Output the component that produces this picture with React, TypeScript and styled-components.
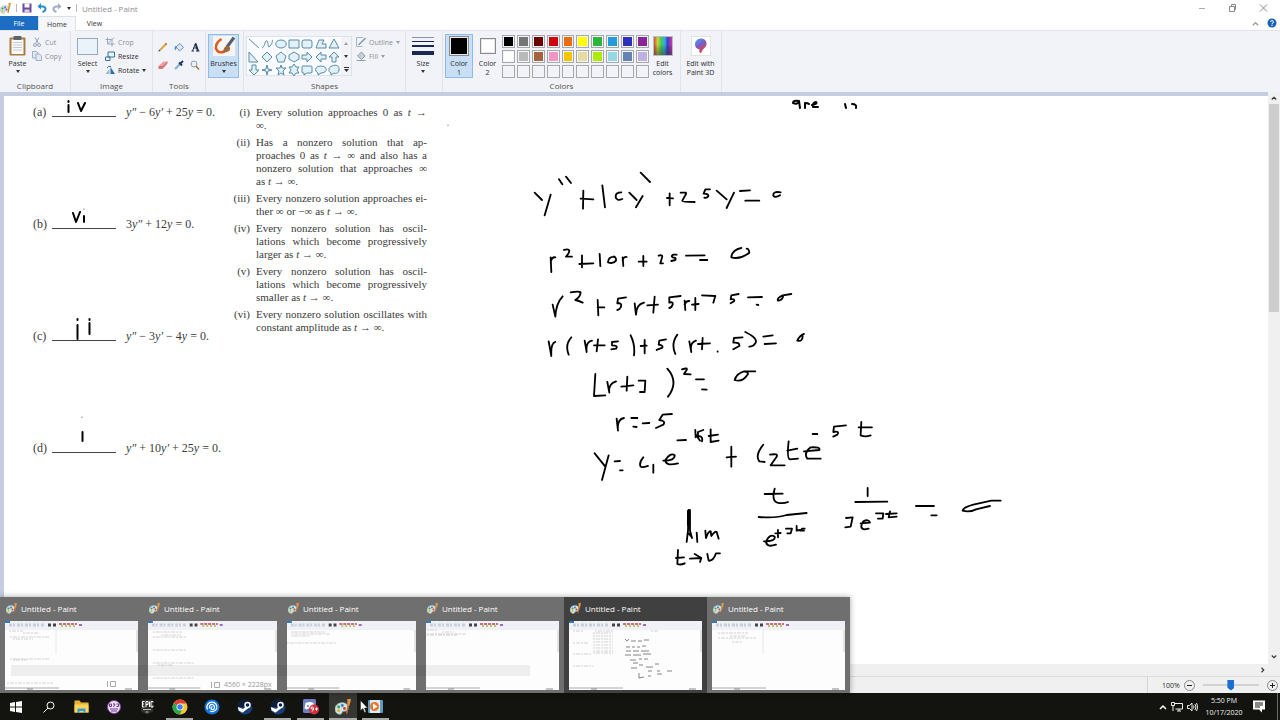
import React from "react";
import styled, { createGlobalStyle } from "styled-components";

const GlobalStyle = createGlobalStyle`
  * { box-sizing: border-box; }
  body { margin: 0; background: #fff; font: 7px/9px "Open Sans", "Noto Sans", sans-serif; color: #2b2b2b; }
  button, input { font: inherit; color: inherit; margin: 0; padding: 0; border: 0; background: none; }
  svg { display: block; flex: none; }
`;

/* ---------- window frame ---------- */

const Desktop = styled.div`
  min-height: 100vh;
  display: flex;
  flex-direction: column;
  position: relative;
`;

const TitleBar = styled.header`
  height: 16px;
  display: flex;
  align-items: center;
  justify-content: space-between;
  font-size: 8px;
  color: #8c8c8c;
`;

const TitleLeft = styled.div`
  display: flex;
  align-items: center;
  gap: 5px;
`;

const TitleRight = styled.div`
  display: flex;
  align-items: center;
  gap: 22px;
  padding-right: 12px;
`;

const Rule = styled.span`
  width: 1px;
  height: 8px;
  background: #b8b8b8;
`;

const PlainButton = styled.button`
  display: flex;
  align-items: center;
  justify-content: center;
`;

const TabBar = styled.nav`
  height: 15px;
  display: flex;
  align-items: stretch;
  border-bottom: 1px solid #e3e5ea;
`;

const Tab = styled.button<{ $kind?: "file" | "active" }>`
  width: ${(p) => (p.$kind ? 38 : 37)}px;
  color: ${(p) => (p.$kind === "file" ? "#fff" : "#333")};
  background: ${(p) =>
    p.$kind === "file" ? "#1b6ec2" : p.$kind === "active" ? "#f6f7fa" : "transparent"};
  border: solid #dcdfe5;
  border-width: ${(p) => (p.$kind === "active" ? "1px 1px 0" : "0")};
  margin-bottom: ${(p) => (p.$kind === "active" ? -1 : 0)}px;
`;

const TabTools = styled.div`
  margin-left: auto;
  display: flex;
  align-items: center;
  gap: 8px;
  padding-right: 3px;
`;

/* ---------- ribbon ---------- */

const Ribbon = styled.section`
  height: 61px;
  display: flex;
  background: #f1f3f8;
`;

const Group = styled.section<{ $w: number }>`
  width: ${(p) => p.$w}px;
  padding-top: 3px;
  display: flex;
  flex-direction: column;
  justify-content: space-between;
  border-right: 1px solid #e0e3e9;
`;

const GroupBody = styled.div<{ $gap?: number; $left?: number }>`
  display: flex;
  align-items: flex-start;
  gap: ${(p) => p.$gap ?? 0}px;
  padding-left: ${(p) => p.$left ?? 0}px;
`;

const GroupName = styled.h2`
  margin: 0 0 2px;
  font: inherit;
  font-size: 8px;
  text-align: center;
  color: #505050;
  height: 9px;
`;

const BigButton = styled.button<{ $w: number; $on?: boolean }>`
  width: ${(p) => p.$w}px;
  height: 44px;
  flex: none;
  display: flex;
  flex-direction: column;
  align-items: center;
  white-space: nowrap;
  padding-top: ${(p) => (p.$on ? 1 : 2)}px;
  background: ${(p) => (p.$on ? "#c9dff6" : "transparent")};
  border: ${(p) => (p.$on ? "1px solid #8fbbe6" : "0")};
  & > svg {
    margin-top: 2px;
  }
`;

const BigIcon = styled.span`
  height: 20px;
  margin-bottom: 3px;
  display: flex;
  align-items: center;
`;

const SmallStack = styled.div`
  display: flex;
  flex-direction: column;
  padding-top: 1px;
`;

const SmallButton = styled.button<{ $dim?: boolean }>`
  height: 14px;
  display: flex;
  align-items: center;
  gap: 3px;
  white-space: nowrap;
  color: ${(p) => (p.$dim ? "#8d9097" : "#2b2b2b")};
`;

const ToolGrid = styled.div`
  display: grid;
  grid-template-columns: repeat(3, 16px);
  grid-auto-rows: 18px;
  padding-top: 4px;
`;

const Gallery = styled.div`
  display: flex;
  margin-top: 2px;
  height: 40px;
  border: 1px solid #dde3ea;
  background: #fafcff;
`;

const GalleryGrid = styled.div`
  display: grid;
  grid-template-columns: repeat(7, 1fr);
  grid-template-rows: repeat(3, 13px);
  width: 94px;
`;

const GalleryScroll = styled.div`
  width: 10px;
  display: grid;
  grid-template-rows: repeat(3, 13px);
  background: #f1f3f8;
`;

const ColorChip = styled.span<{ $color: string; $size: number }>`
  width: ${(p) => p.$size}px;
  height: ${(p) => p.$size}px;
  background: ${(p) => p.$color};
  border: 1px solid #8a8a8a;
  box-shadow: inset 0 0 0 1px #e8e8e8;
`;

const Palette = styled.div`
  display: grid;
  grid-template-columns: repeat(10, 1fr);
  grid-auto-rows: 13px;
  column-gap: 2px;
  row-gap: 2px;
  width: 147px;
  padding-top: 1px;
`;

const Swatch = styled.button<{ $color: string }>`
  background: ${(p) => p.$color};
  border: 1px solid #a6a8ac;
  box-shadow: inset 0 0 0 1px #f4f5f7;
`;

/* ---------- drawing area ---------- */

const Workspace = styled.main`
  flex: 1;
  display: flex;
  background: #c5cde0;
`;

const Canvas = styled.div`
  flex: 1;
  margin: 4px 0 0 4px;
  background: #fff;
  position: relative;
  overflow: hidden;
`;

const Paper = styled.div`
  display: flex;
  padding: 10px 0 0 29px;
  font: 11px/13px "Liberation Serif", "Times New Roman", serif;
  color: #3a3a3a;
`;

const Questions = styled.ol`
  list-style: none;
  margin: 0;
  padding: 0;
  width: 195px;
  display: grid;
  grid-auto-rows: 112px;
  font-size: 12px;
`;

const Question = styled.li`
  display: grid;
  grid-template-columns: 19px 64px 1fr;
  align-items: start;
  white-space: nowrap;
`;

const Blank = styled.span`
  height: 11px;
  border-bottom: 1px solid #444;
`;

const Formula = styled.span`
  padding-left: 10px;
`;

const Answers = styled.ol`
  list-style: none;
  margin: 0;
  padding: 0;
  width: 199px;
  display: flex;
  flex-direction: column;
  gap: 4px;
`;

const Answer = styled.li`
  display: grid;
  grid-template-columns: 22px 171px;
  column-gap: 6px;
`;

const Numeral = styled.span`
  text-align: right;
  white-space: nowrap;
`;

const Line = styled.span<{ $fill?: boolean }>`
  display: block;
  white-space: nowrap;
  text-align-last: ${(p) => (p.$fill ? "justify" : "left")};
`;

const Ink = styled.svg`
  position: absolute;
  left: 0;
  top: 0;
  fill: none;
  stroke: #000;
  stroke-linecap: round;
  stroke-linejoin: round;
`;

const VScroll = styled.div`
  width: 12px;
  background: #f0f0f0;
  display: flex;
  flex-direction: column;
  align-items: center;
  padding: 3px 0 4px;
`;

const VTrack = styled.div`
  flex: 1;
  width: 10px;
  margin: 3px 0;
`;

const VThumb = styled.div`
  height: 38%;
  background: #cdcdcd;
`;

const HScroll = styled.div`
  height: 12px;
  background: #f0f0f0;
  display: flex;
  align-items: center;
  justify-content: space-between;
  padding: 0 14px 0 3px;
`;

const StatusBar = styled.footer`
  height: 17px;
  background: #f0f0f0;
  border-top: 1px solid #dadada;
  display: flex;
  justify-content: flex-end;
  align-items: stretch;
`;

const Zoom = styled.div`
  width: 133px;
  border-left: 1px solid #d4d4d4;
  display: flex;
  align-items: center;
  gap: 4px;
  padding: 0 2px 0 14px;
`;

const ZoomRange = styled.input`
  flex: 1;
  min-width: 0;
  height: 12px;
  margin: 0 4px;
  appearance: none;
  background: linear-gradient(#d2d2d2, #d2d2d2) center / 100% 2px no-repeat;
  &::-webkit-slider-thumb {
    appearance: none;
    width: 7px;
    height: 11px;
    background: #1a6fd0;
    clip-path: polygon(0 0, 100% 0, 100% 75%, 50% 100%, 0 75%);
  }
`;

/* ---------- window previews ---------- */

const Previews = styled.div`
  position: absolute;
  left: 0;
  bottom: 27px;
  display: flex;
  height: 96px;
  background: #6f6f6f;
  box-shadow: 0 0 6px rgba(0, 0, 0, 0.35);
`;

const Preview = styled.button<{ $w: number; $on?: boolean }>`
  width: ${(p) => p.$w}px;
  padding: 0 5px 3px;
  display: flex;
  flex-direction: column;
  background: ${(p) => (p.$on ? "#404040" : "transparent")};
  color: #fff;
  font-size: 8px;
`;

const PreviewTitle = styled.span`
  height: 24px;
  display: flex;
  align-items: center;
  gap: 4px;
  padding: 0 0 2px 1px;
`;

const Mini = styled.span`
  flex: 1;
  width: 100%;
  background: #fdfdfd;
  overflow: hidden;
`;

const GhostBar = styled.span`
  position: absolute;
  left: 11px;
  top: 68px;
  width: 519px;
  height: 11px;
  background: rgba(0, 0, 0, 0.06);
`;

const GhostText = styled.span<{ $x: number }>`
  position: absolute;
  left: ${(p) => p.$x}px;
  top: 83px;
  display: flex;
  gap: 4px;
  align-items: center;
  color: #9b9b9b;
`;

/* ---------- taskbar ---------- */

const Taskbar = styled.footer`
  height: 27px;
  background: #131410;
  display: flex;
  justify-content: space-between;
  color: #f2f2f2;
`;

const Apps = styled.nav`
  display: flex;
  width: 392px;
`;

const AppButton = styled.button<{ $open?: boolean; $on?: boolean }>`
  flex: 1;
  display: flex;
  align-items: center;
  justify-content: center;
  background: ${(p) => (p.$on ? "#363733" : "transparent")};
  background-clip: content-box;
  padding: 0 2px;
  position: relative;
  &::after {
    content: "";
    display: ${(p) => (p.$open ? "block" : "none")};
    position: absolute;
    left: ${(p) => (p.$on ? 2 : 3)}px;
    right: ${(p) => (p.$on ? 2 : 3)}px;
    bottom: 0;
    height: 2px;
    background: #a9aaa8;
  }
`;

const Tray = styled.div`
  display: flex;
  align-items: center;
  gap: 4px;
`;

const Clock = styled.time`
  width: 42px;
  margin: 0 4px 0 1px;
  text-align: center;
  line-height: 12px;
  white-space: nowrap;
  font-size: 7px;
`;

const DesktopEdge = styled.span`
  width: 1px;
  height: 27px;
  margin: 0 2px 0 8px;
  background: #6a6a66;
`;

const Pointer = styled.svg`
  position: absolute;
  left: 360px;
  bottom: 7px;
`;

/* ---------- drawings ---------- */

const PaintLogo = ({ size = 11 }: { size?: number }) => (
  <svg width={size} height={size} viewBox="0 0 22 22">
    <path d="M10 5C4 5 0 9 0 14c0 4 3 7 7 7 3 0 2-3 4-4s6 1 7-4-3-8-8-8z" fill="#cfe3e6" stroke="#9fb8ba" />
    <circle cx="5" cy="11" r="2" fill="#3f9b45" />
    <circle cx="10" cy="9" r="2" fill="#2f7fd1" />
    <circle cx="5" cy="16" r="2" fill="#e6b422" />
    <circle cx="13" cy="13" r="2" fill="#d8432c" />
    <path d="M19 5l-3 15" stroke="#b9702c" strokeWidth="2" />
    <path d="M17 0h5l-2 9h-3z" fill="#e8953c" />
  </svg>
);

const Caret = ({ up, dim }: { up?: boolean; dim?: boolean }) => (
  <svg width="4" height="3" viewBox="0 0 4 3">
    <path d={up ? "M0 3h4L2 0z" : "M0 0h4L2 3z"} fill={dim ? "#9a9da3" : "#333"} />
  </svg>
);

const Chevron = ({ d, color = "#333", size = 7 }: { d: string; color?: string; size?: number }) => (
  <svg width={size} height={size} viewBox="0 0 8 8" fill="none" stroke={color} strokeWidth="1.5">
    <path d={d} />
  </svg>
);

const UP = "M1 6l3-3 3 3";
const DOWN = "M1 2l3 3 3-3";
const LEFT = "M6 1L3 4l3 3";
const RIGHT = "M2 1l3 3-3 3";

const SHAPES = [
  "M1 1l10 9", "M1 10C4 9 4 1 6 3s0 8 3 5 2-6 3-6", "M6 2c7 0 7 8 0 8s-7-8 0-8z", "M1 2h10v8H1z",
  "M3 2h6q2 0 2 2v4q0 2-2 2H3q-2 0-2-2V4q0-2 2-2z", "M4 2h5L7 6h4v4H1z", "M6 1l5 9H1z",
  "M1 1v10h9z", "M6 1l5 5-5 5-5-5z", "M6 1l5 4-2 6H3L1 5z", "M6 1l5 3v4l-5 3-5-3V4z",
  "M1 4h5V1l5 5-5 5V8H1z", "M11 4H6V1L1 6l5 5V8h5z", "M4 11V6H1l5-5 5 5H8v5z",
  "M4 1v5H1l5 5 5-5H8V1z", "M6 1l1 4 4 1-4 1-1 4-1-4-4-1 4-1z",
  "M6 1l1 3h4L8 7l1 4-3-2-3 2 1-4-3-3h4z", "M6 0l2 3h3L9 6l2 3H8l-2 3-2-3H1l2-3-2-3h3z",
  "M2 2h8q1 0 1 1v5q0 1-1 1H6l-3 2V9H2Q1 9 1 8V3q0-1 1-1z",
  "M6 2c7 0 7 7 0 7l-3 2V9C-1 7 0 2 6 2z", "M4 2c4-2 8 0 7 4 0 3-3 4-5 3l-3 2V9C0 8 0 3 4 2z",
];

const ROW_A = ["#000000", "#757575", "#6a0000", "#d1000c", "#ed6d0c", "#ffff00", "#2bb53b", "#239cd9", "#302fb9", "#8b2597"];
const ROW_B = ["#ffffff", "#b9b9b9", "#a5643f", "#f297c1", "#f5c500", "#e6dca2", "#aeeb09", "#95d7e5", "#6483b1", "#beb0e1"];
const ROW_C = Array(10).fill("#f1f3f8");

/* Pen strokes are recorded at three times the canvas scale, one entry per area. */
const STROKES = [
  {
    x: 520, y: 160,
    d: "M44 98l22 22M92 104L74 166M117 58l10 15M138 50l15 19M190 92l-1 54M182 116l38 2M247 76l8 66M304 97q-18 0-17 14 2 13 20 6M328 98l22 22M368 108l-20 34M362 38l28 28M449 100v36M441 114l18 1M482 98l16 0 0 4-11 20q0 4 37 4M570 88h-14l-5 13q16 0 14 8-4 6-12 4M590 92l30 26M642 98l-22 46M660 93l30-2M676 122l42 0M782 97q-24-4-22 10 6 8 20-1" +
      "M92 292l2 44M92 306q4-16 14-14M132 270q14-4 16 2 0 8-10 18l18 0M186 286v36M178 312l42-2M239 282l2 36M284 290q-20 0-20 17 16 6 24-5 1-12-8-12M308 292l2 26M308 302q4-14 12-11M370 288v30M356 305l24 0M416 287q14-4 10 6l-5 17h8M470 284h-10q-8 4-2 8 12 0 8 8l-12 3M498 287l56-1M540 300h22M664 264q-28 6-30 28 26 8 54-14-1-12-8-12" +
      "M98 434l8 36q2-40 22-61M152 397q28-4 30 1-2 14-16 22 10 2 22 8M233 420l2 46M233 442l20 0M318 412l-24 4-2 14q16-2 10 12-4 8-10 8M344 430l4 34q0-30 24-36M404 410l-4 48M382 436l32-2M482 408l-34 4 0 16q12-4 10 6-4 10-10 10M494 422l2 28M494 434q4-12 14-11M526 414v36M516 434l20-2M546 406l40 2-6 20M656 402l-22 4-2 12q14-2 10 6l-10 6M684 412l42-1M710 434l5 1M814 402l-26 4q-18 8-14 16 12 0 16-14" +
      "M86 544l8 44q-2-38 12-42M154 532q-20 22-8 52M194 542l6 34q-4-30 16-34M234 538l-4 36M222 556l32 0M294 544l-18 2 0 10q20 0 12 10l-14 2M332 526q14 28 10 60M374 540v40M362 558l18-1M438 538l-20 4-2 12q16 2 10 10l-16 6M472 524q-20 28-6 58M508 544l6 32q-6-28 14-34M548 534l-2 34M534 552l36-2M593 574v1M668 532l-26 2-2 14q20-2 18 10l-18 10M676 516q40 20 30 34-6 10-18 10M730 530l28-4M734 552l34-2M852 522q-12 4-20 20 16 4 16-14",
  },
  {
    x: 540, y: 350,
    d: "M166 72l-4 66 34-2M202 96l6 32q-4-26 20-34M262 80l-2 42M244 110l36-4M296 92l20 0-2 34-14 0M382 56q36 40 2 84M426 58q18-6 14 2l-8 12 20 1M468 88l24 0M486 118l14 1M646 64l-34 0q-22 6-28 26 24 8 40-18 0-8-12-8" +
      "M230 206l4 36q-4-34 18-38M274 204l18 0M280 230l10 1M308 220l20-1M396 192l-28 2-10 16q20 2 12 14l-22 10" +
      "M164 310l32 40M206 316l-20 74M224 334l16-1M240 361l8 0M310 322q-14 16-8 28 4 4 22-2M340 344v24M370 332q36 0 34-16-12-10-28 14 0 20 38 10M412 271l26-1M466 240l1 22M490 240l-16 6 0 12q16 0 12 16M468 254l12 18M512 238l0 38 24-4M506 258l28-4M574 290v60M560 322l28-2M670 284q-26 32-12 50l16 2M690 314q26-4 20 6l-18 26 42 0M746 274q-6 52 4 54l24-2M742 302l30-6M792 304l46-4q4-10-26-8-22 18-10 34l40 0M818 252l14 0M918 226l-36 4-2 16q20-4 12 8l-12 6M964 216l-2 40q14 6 30 0M956 232l40 0",
  },
  {
    x: 660, y: 470,
    d: "M86 120l-2 62-4 34M90 120l0 62 6 22M86 190l10 12M110 188l2 28M136 182l2 22q8-22 14-20l2 14q12-16 16-12l6 20" +
      "M54 240l-2 42q10 4 22-2M48 264l24-2M90 266l34-2M104 252l20 12-4 12M142 252l4 20q14 2 22-22l12 0" +
      "M344 56q-10 36 8 42 18 4 32-2M314 72l54-1M296 141q54 4 84-6l60-6M312 214q36 0 32-14-14-10-26 14 0 20 30 10M354 180v22M346 190l16-1M378 176l18 0-4 14-10 0M410 168l0 14 10-2M434 176l-8 0-4 6 10 0" +
      "M623 54v24M586 96l96-1M558 144l20-2-6 28-16 2M602 160l28-2q-4-12-20-4-14 22 4 24l12-2M648 130l22 0-2 16-14 0M690 124l-4 18 24-2M678 132l32-2M768 108l54 0M814 136l16 0M1022 92l-28 0-54 12q-30 8-32 18 20 6 40-4l42-10",
  },
];

const FILLED_IN =
  "M68.500 105v7M68.500 101v1M78 103l3 8 4-8M73 213l3 9 4-10M84 216v6M77.500 325v14M77.500 319v1M89.500 323v11M89.500 319v1M82.500 432v9";

type Entry = { n: string; lines: React.ReactNode[] };
const lim = <><i>t</i> → ∞</>;
const ENTRIES: Entry[] = [
  { n: "(i)", lines: [<>Every solution approaches 0 as <i>t</i> →</>, "∞."] },
  {
    n: "(ii)",
    lines: ["Has a nonzero solution that ap-", <>proaches 0 as {lim} and also has a</>, "nonzero solution that approaches ∞", <>as {lim}.</>],
  },
  { n: "(iii)", lines: ["Every nonzero solution approaches ei-", <>ther ∞ or −∞ as {lim}.</>] },
  { n: "(iv)", lines: ["Every nonzero solution has oscil-", "lations which become progressively", <>larger as {lim}.</>] },
  { n: "(v)", lines: ["Every nonzero solution has oscil-", "lations which become progressively", <>smaller as {lim}.</>] },
  { n: "(vi)", lines: ["Every nonzero solution oscillates with", <>constant amplitude as {lim}.</>] },
];

const Y = <i>y</i>;
const Y1 = <i>y′</i>;
const Y2 = <i>y″</i>;
const QUESTIONS: [string, React.ReactNode][] = [
  ["(a)", <>{Y2} − 6{Y1} + 25{Y} = 0.</>],
  ["(b)", <>3{Y2} + 12{Y} = 0.</>],
  ["(c)", <>{Y2} − 3{Y1} − 4{Y} = 0.</>],
  ["(d)", <>{Y2} + 10{Y1} + 25{Y} = 0.</>],
];

const MINI_INK = [
  "M4 10h14M18 12h16M5 16h40M8 18h20M5 38h40M8 39h14M2 62h46",
  "M5 11h30M14 14h20M5 16h34M5 29h34M5 42h42M10 44h16M5 57h42",
  "M4 11h36M5 13h40M4 15h20M0 22h50",
  "M1 9h10M16 11h12M1 13h40M1 14h30",
  "M4 10h10M4 22h16M4 33h18M4 45h20M26 10h18M24 12h20M24 15h20M24 18h20M24 21h20M24 24h20M24 27h20M24 30h20M24 32h20M82 10h8",
  "M6 12h30M18 15h16M6 17h38M20 21h10",
];

const MiniPage = ({ index }: { index: number }) => (
  <svg width="100%" height="69" viewBox="0 0 133 69" preserveAspectRatio="none" fill="none">
    <rect width="133" height="9" fill="#eff1f7" />
    <path d="M0 1h5" stroke="#2f78c4" strokeWidth="2" />
    <path d="M4 4h36" stroke="#c9d0da" strokeWidth="3" strokeDasharray="3 1 2 2" />
    <path d="M43 4h3M48 4h3" stroke="#444" strokeWidth="3" />
    <path d="M54 3h18" stroke="#c86f7a" strokeWidth="2" strokeDasharray="3 1" />
    <path d="M56 5h14" stroke="#b9c96a" strokeWidth="2" strokeDasharray="2 2" />
    <path d="M74 4h3" stroke="#9a6ac0" strokeWidth="2" />
    <path d={MINI_INK[index]} stroke="#bdbdbd" strokeWidth=".7" strokeDasharray="2 1 4 1" />
    {index === 4 && (
      <path
        d="M56 18l2 2 2-2M62 20h5M69 20h4M75 19h5M57 26h4M63 26h3M68 26h3M73 25h4M57 30h5M64 30h6M72 30h8M56 34h6M64 34h8M74 33h8M61 39h6M70 38h3M75 38h4M64 42h5M62 47h6M70 44h4M77 46h7M86 43h4M70 52v5l5-1M79 50h4M79 55h3M88 50h3M88 53h5M98 50h5"
        stroke="#666" strokeWidth=".8"
      />
    )}
    {(index === 0 || index === 5) && <path d="M51 9v24" stroke="#e8e8e8" />}
    <path d="M132 9v22" stroke="#c9c9c9" />
    <path d="M0 67h54" stroke="#aaa" />
    <path d="M22 68h6M120 68h7" stroke="#888" />
  </svg>
);

const SmallGlyph = ({ children }: { children: React.ReactNode }) => (
  <svg width="10" height="10" viewBox="0 0 20 20" fill="none" strokeWidth="2">{children}</svg>
);

const TASK = 16;
const Steam = () => (
  <svg width={TASK} height={TASK} viewBox="0 0 32 32">
    <circle cx="16" cy="16" r="15" fill="#173f77" />
    <path d="M1 16A15 15 0 0 1 31 16z" fill="#0e1f3d" />
    <path d="M2 16l10 4 7-6 4 4-9 7q-3 4-7 0l-4-2z" fill="#fff" />
    <circle cx="21" cy="12" r="5" fill="#0e1f3d" stroke="#fff" strokeWidth="3" />
  </svg>
);

const SizeGlyph = () => (
  <svg width="9" height="8" viewBox="0 0 9 8" fill="none" stroke="#aaa"><path d="M.5 1v6M3.500 1.500h5v5h-5z" /></svg>
);

export default function App() {
  return (
    <>
      <GlobalStyle />
      <Desktop>
        <TitleBar>
          <TitleLeft>
            <PaintLogo />
            <Rule />
            <PlainButton aria-label="Save">
              <svg width="10" height="10" viewBox="0 0 20 20">
                <path d="M1 1h18v18H1z" fill="#6c4a9c" />
                <path d="M5 1h10v8H5z" fill="#fff" />
                <path d="M5 13h10v6H5z" fill="#d9d0e8" />
              </svg>
            </PlainButton>
            <PlainButton aria-label="Undo">
              <svg width="10" height="10" viewBox="0 0 20 20" fill="none" stroke="#2a8fc9" strokeWidth="4">
                <path d="M4 7h8q5 1 5 5t-6 6" />
                <path d="M8 0L1 7l7 6z" fill="#2a8fc9" stroke="none" />
              </svg>
            </PlainButton>
            <PlainButton aria-label="Redo">
              <svg width="10" height="10" viewBox="0 0 20 20" fill="none" stroke="#9fb0c6" strokeWidth="4">
                <path d="M16 7H8q-5 1-5 5t6 6" />
                <path d="M12 0l7 7-7 6z" fill="#9fb0c6" stroke="none" />
              </svg>
            </PlainButton>
            <PlainButton aria-label="Customize toolbar"><Caret /></PlainButton>
            <Rule />
            <span>Untitled - Paint</span>
          </TitleLeft>
          <TitleRight>
            <PlainButton aria-label="Minimize">
              <svg width="8" height="8" viewBox="0 0 8 8" stroke="#aaa"><path d="M1 4.500h6" /></svg>
            </PlainButton>
            <PlainButton aria-label="Restore">
              <svg width="9" height="8" viewBox="0 0 9 8" fill="none" stroke="#888">
                <path d="M1.500 2.500h5v5h-5zM3.500 2V.500h4v5H7" />
              </svg>
            </PlainButton>
            <PlainButton aria-label="Close">
              <svg width="9" height="8" viewBox="0 0 9 8" stroke="#888"><path d="M1 .5l7 7M8 .5l-7 7" /></svg>
            </PlainButton>
          </TitleRight>
        </TitleBar>

        <TabBar>
          <Tab $kind="file">File</Tab>
          <Tab $kind="active">Home</Tab>
          <Tab>View</Tab>
          <TabTools>
            <PlainButton aria-label="Collapse ribbon"><Chevron d={UP} color="#999" /></PlainButton>
            <PlainButton aria-label="Help">
              <svg width="10" height="10" viewBox="0 0 20 20">
                <circle cx="10" cy="10" r="9" fill="#1560b8" />
                <path d="M7 8q0-3 3-3t3 3q0 2-3 3v2M10 14v2" fill="none" stroke="#fff" strokeWidth="2" />
              </svg>
            </PlainButton>
          </TabTools>
        </TabBar>

        <Ribbon>
          <Group $w={71}>
            <GroupBody $left={3}>
              <BigButton $w={29}>
                <BigIcon>
                  <svg width="17" height="20" viewBox="0 0 34 40">
                    <rect x="1" y="3" width="32" height="36" rx="2" fill="#a97c42" />
                    <rect x="5" y="7" width="24" height="29" fill="#fafafa" />
                    <path d="M8 13h18M8 18h18M8 23h18M8 28h18" stroke="#c3ccd6" strokeWidth="2" />
                    <rect x="9" y="0" width="16" height="8" rx="2" fill="#5d636a" />
                  </svg>
                </BigIcon>
                Paste
                <Caret />
              </BigButton>
              <SmallStack>
                <SmallButton $dim>
                  <SmallGlyph>
                    <path d="M6 1l7 12M14 1L7 13" stroke="#96a3b5" />
                    <circle cx="6" cy="16" r="3" stroke="#96a3b5" />
                    <circle cx="14" cy="16" r="3" stroke="#96a3b5" />
                  </SmallGlyph>
                  Cut
                </SmallButton>
                <SmallButton $dim>
                  <SmallGlyph>
                    <path d="M1 1h8l3 3v10H1z" fill="#e3eaf3" stroke="#9fb0c6" />
                    <path d="M8 6h7l4 4v9H8z" fill="#e3eaf3" stroke="#9fb0c6" />
                  </SmallGlyph>
                  Copy
                </SmallButton>
              </SmallStack>
            </GroupBody>
            <GroupName>Clipboard</GroupName>
          </Group>

          <Group $w={82}>
            <GroupBody $left={3} $gap={4}>
              <BigButton $w={27}>
                <BigIcon>
                  <svg width="21" height="17" viewBox="0 0 21 17">
                    <rect x=".5" y=".5" width="20" height="16" fill="#eaf3fa" stroke="#3a6378" strokeDasharray="1 1" />
                  </svg>
                </BigIcon>
                Select
                <Caret />
              </BigButton>
              <SmallStack>
                <SmallButton $dim>
                  <SmallGlyph>
                    <path d="M5 1v13h14M1 5h13v14M5 14L18 1" stroke="#96a9bf" />
                  </SmallGlyph>
                  Crop
                </SmallButton>
                <SmallButton>
                  <SmallGlyph>
                    <path d="M6 2h13v10H6zM1 12h9v7H1z" fill="#e6f3fa" stroke="#3b7391" />
                  </SmallGlyph>
                  Resize
                </SmallButton>
                <SmallButton>
                  <SmallGlyph>
                    <path d="M1 18h8V8z" fill="#9fb9cc" />
                    <path d="M11 18h9L11 4z" fill="#2671a8" />
                    <path d="M4 6q3-5 8-3" stroke="#2671a8" />
                  </SmallGlyph>
                  Rotate <Caret />
                </SmallButton>
              </SmallStack>
            </GroupBody>
            <GroupName>Image</GroupName>
          </Group>

          <Group $w={53}>
            <GroupBody $left={2}>
              <ToolGrid>
                <PlainButton aria-label="Pencil">
                  <SmallGlyph><path d="M4 16L17 3" stroke="#d9a441" strokeWidth="4" /><path d="M1 19l4-1-3-3z" fill="#333" /><path d="M15 3l2 2" stroke="#b0524a" strokeWidth="3" /></SmallGlyph>
                </PlainButton>
                <PlainButton aria-label="Fill with color">
                  <SmallGlyph><path d="M4 10l8-7 7 8-8 7z" fill="#dbe7f1" stroke="#7b92a8" /><path d="M2 8q-2 6 1 9l3-8z" fill="#3f93cc" /></SmallGlyph>
                </PlainButton>
                <PlainButton aria-label="Text">
                  <SmallGlyph><path d="M3 18h5M12 18h7M5 18l6-15 5 15M7 12h7" stroke="#1f3050" /><path d="M11 3l5 15" stroke="#1f3050" strokeWidth="4" /></SmallGlyph>
                </PlainButton>
                <PlainButton aria-label="Eraser">
                  <SmallGlyph><path d="M1 12L11 3h8L9 13z" fill="#f0a0a4" /><path d="M1 12h8l10-10v5L9 18H1z" fill="#d7757c" /></SmallGlyph>
                </PlainButton>
                <PlainButton aria-label="Color picker">
                  <SmallGlyph><path d="M2 18L12 8" stroke="#7fb2d8" strokeWidth="4" /><path d="M10 5l6 6M13 7l5-5" stroke="#223c66" strokeWidth="4" /></SmallGlyph>
                </PlainButton>
                <PlainButton aria-label="Magnifier">
                  <SmallGlyph><circle cx="8" cy="8" r="6" fill="#e9f2fa" stroke="#8a9db3" /><path d="M12 12l6 7" stroke="#a5763f" strokeWidth="3" /></SmallGlyph>
                </PlainButton>
              </ToolGrid>
            </GroupBody>
            <GroupName>Tools</GroupName>
          </Group>

          <Group $w={38}>
            <GroupBody $left={2}>
              <BigButton $w={31} $on>
                <BigIcon>
                  <svg width="22" height="20" viewBox="0 0 44 40">
                    <rect width="44" height="40" fill="#f7f4f2" />
                    <path d="M17 6Q5 13 6 25q4 11 17 6" fill="none" stroke="#dc5a24" strokeWidth="5" />
                    <path d="M28 22L42 3" stroke="#53606e" strokeWidth="6" />
                    <path d="M20 33q1-12 9-14 8 4 4 10-5 5-13 4z" fill="#9a6a3c" />
                  </svg>
                </BigIcon>
                Brushes
                <Caret />
              </BigButton>
            </GroupBody>
          </Group>

          <Group $w={162}>
            <GroupBody $left={2} $gap={4}>
              <Gallery>
                <GalleryGrid>
                  {SHAPES.map((d, i) => (
                    <PlainButton key={i} aria-label={`Shape ${i + 1}`}>
                      <svg width="12" height="12" viewBox="0 0 12 12"><path d={d} fill={i < 2 ? "none" : "#e2f1f8"} stroke="#477f9c" strokeWidth=".9" /></svg>
                    </PlainButton>
                  ))}
                </GalleryGrid>
                <GalleryScroll>
                  <PlainButton aria-label="Scroll shapes up"><Caret up dim /></PlainButton>
                  <PlainButton aria-label="Scroll shapes down"><Caret /></PlainButton>
                  <PlainButton aria-label="More shapes">
                    <svg width="5" height="5" viewBox="0 0 5 5" fill="#333"><path d="M0 0h5v1H0zM0 2h5L2.500 5z" /></svg>
                  </PlainButton>
                </GalleryScroll>
              </Gallery>
              <SmallStack>
                <SmallButton $dim>
                  <SmallGlyph><path d="M14 1H1v18h12" stroke="#a9b6c6" /><path d="M5 16L19 2" stroke="#8494a8" strokeWidth="3" /></SmallGlyph>
                  Outline <Caret dim />
                </SmallButton>
                <SmallButton $dim>
                  <SmallGlyph><path d="M3 10l8-8 7 8-7 7z" fill="#c7d0dc" stroke="#8d9bb0" /><path d="M1 19h18" stroke="#8d9bb0" /></SmallGlyph>
                  Fill <Caret dim />
                </SmallButton>
              </SmallStack>
            </GroupBody>
            <GroupName>Shapes</GroupName>
          </Group>

          <Group $w={37}>
            <GroupBody $left={3}>
              <BigButton $w={28}>
                <BigIcon>
                  <svg width="22" height="18" viewBox="0 0 22 18" fill="#1b2850">
                    <path d="M0 0h22v1H0z" fill="#8b93a8" />
                    <path d="M0 4h22v1H0zM0 8h22v2H0zM0 14h22v4H0z" />
                  </svg>
                </BigIcon>
                Size
                <Caret />
              </BigButton>
            </GroupBody>
          </Group>

          <Group $w={238}>
            <GroupBody $left={2}>
              <BigButton $w={28} $on>
                <BigIcon><ColorChip $color="#000" $size={20} /></BigIcon>
                Color<br />1
              </BigButton>
              <BigButton $w={29}>
                <BigIcon><ColorChip $color="#fff" $size={16} /></BigIcon>
                Color<br />2
              </BigButton>
              <Palette>
                {[...ROW_A, ...ROW_B, ...ROW_C].map((c, i) => (
                  <Swatch key={i} $color={c} aria-label={`Palette color ${i + 1}`} />
                ))}
              </Palette>
              <BigButton $w={27}>
                <BigIcon>
                  <svg width="20" height="20" viewBox="0 0 20 20">
                    <defs>
                      <linearGradient id="hue">
                        <stop offset="0" stopColor="#d84a38" /><stop offset=".2" stopColor="#c8d43c" />
                        <stop offset=".4" stopColor="#3ecf58" /><stop offset=".6" stopColor="#39a9e0" />
                        <stop offset=".75" stopColor="#3b3fd0" /><stop offset="1" stopColor="#d0389c" />
                      </linearGradient>
                      <linearGradient id="shade" x2="0" y2="1">
                        <stop offset=".4" stopColor="#000" stopOpacity="0" /><stop offset="1" stopColor="#333" stopOpacity=".5" />
                      </linearGradient>
                    </defs>
                    <rect width="20" height="20" fill="#b9bcc1" />
                    <rect x="1" y="1" width="18" height="18" fill="url(#hue)" />
                    <rect x="1" y="1" width="18" height="18" fill="url(#shade)" />
                  </svg>
                </BigIcon>
                Edit<br />colors
              </BigButton>
            </GroupBody>
            <GroupName>Colors</GroupName>
          </Group>

          <Group $w={41}>
            <GroupBody $left={3}>
              <BigButton $w={33}>
                <BigIcon>
                  <svg width="20" height="20" viewBox="0 0 40 40">
                    <defs>
                      <linearGradient id="drop" x1="0" y1="0" x2=".6" y2="1">
                        <stop offset="0" stopColor="#38b6e8" /><stop offset=".5" stopColor="#7a5ad0" /><stop offset="1" stopColor="#e8442c" />
                      </linearGradient>
                    </defs>
                    <rect x=".5" y=".5" width="39" height="39" fill="#fff" stroke="#c9ccd1" />
                    <path d="M20 5c7 0 12 5 11 12-1 6-6 8-8 11-1 3-2 6-4 6s-3-3-2-7C11 26 8 22 8 17 8 10 13 5 20 5z" fill="url(#drop)" />
                  </svg>
                </BigIcon>
                Edit with<br />Paint 3D
              </BigButton>
            </GroupBody>
          </Group>
        </Ribbon>

        <Workspace>
          <Canvas>
            <Paper>
              <Questions>
                {QUESTIONS.map(([n, f]) => (
                  <Question key={n}><span>{n}</span><Blank /><Formula>{f}</Formula></Question>
                ))}
              </Questions>
              <Answers>
                {ENTRIES.map((e) => (
                  <Answer key={e.n}>
                    <Numeral>{e.n}</Numeral>
                    <span>
                      {e.lines.map((l, i) => (
                        <Line key={i} $fill={i < e.lines.length - 1}>{l}</Line>
                      ))}
                    </span>
                  </Answer>
                ))}
              </Answers>
            </Paper>
            <Ink width="1010" height="500" viewBox="4 96 1010 500">
              {STROKES.map((s) => (
                <path key={s.y} d={s.d} strokeWidth="5.500" transform={`translate(${s.x} ${s.y}) scale(.3333)`} />
              ))}
              <path d="M688.500 511v14" strokeWidth="3" />
              <path d={FILLED_IN} strokeWidth="2" />
              <path d="M84 209v.5M82 417v.5M448 125v.5" strokeWidth="1" stroke="#777" />
              <path d="M799 101q-6-1-6 2 5 2 6-2l1 7M805 108v-5q3 0 4 1M812 105q6-1 4-3-4 1-3 5l5 0M845 104l1 4M852 104q5 0 4 4" strokeWidth="2" />
            </Ink>
          </Canvas>
          <VScroll>
            <Chevron d={UP} size={6} />
            <VTrack><VThumb /></VTrack>
            <Chevron d={DOWN} size={6} />
          </VScroll>
        </Workspace>
        <HScroll>
          <Chevron d={LEFT} size={6} />
          <Chevron d={RIGHT} size={6} />
        </HScroll>
        <StatusBar>
          <Zoom>
            <label htmlFor="zoom">100%</label>
            <PlainButton aria-label="Zoom out">
              <svg width="11" height="11" viewBox="0 0 11 11" fill="none" stroke="#888"><circle cx="5.500" cy="5.500" r="5" /><path d="M3 5.500h5" stroke="#222" /></svg>
            </PlainButton>
            <ZoomRange id="zoom" type="range" min="0" max="100" defaultValue="50" />
            <PlainButton aria-label="Zoom in">
              <svg width="11" height="11" viewBox="0 0 11 11" fill="none" stroke="#888"><circle cx="5.500" cy="5.500" r="5" /><path d="M3 5.500h5M5.500 3v5" stroke="#222" /></svg>
            </PlainButton>
          </Zoom>
        </StatusBar>

        <Taskbar>
          <Apps>
            <AppButton aria-label="Start">
              <svg width="12" height="12" viewBox="0 0 24 24" fill="#fff"><path d="M0 4l10-2v9H0zM12 2l12-2v11H12zM0 13h10v9L0 20zM12 13h12v11l-12-2z" /></svg>
            </AppButton>
            <AppButton aria-label="Search">
              <svg width="12" height="12" viewBox="0 0 24 24" fill="none" stroke="#fff" strokeWidth="2"><circle cx="15" cy="9" r="7" /><path d="M10 14l-9 9" /></svg>
            </AppButton>
            <AppButton aria-label="File Explorer">
              <svg width="15" height="13" viewBox="0 0 30 26"><path d="M1 1h10l3 4h15v20H1z" fill="#e9b32e" /><path d="M1 9h28v16H1z" fill="#fbd65c" /><path d="M7 26v-9h16v9h-4v-4h-8v4z" fill="#3a97d8" /></svg>
            </AppButton>
            <AppButton aria-label="Game launcher">
              <svg width="14" height="14" viewBox="0 0 28 28" fill="none"><circle cx="14" cy="14" r="13" fill="#efe4f7" stroke="#7d3fa5" strokeWidth="2" /><path d="M5 8h4v5H5zM12 8h4l-3 6M19 8h4v5h-4M6 18h16M8 22h12" stroke="#6f3599" strokeWidth="2" /></svg>
            </AppButton>
            <AppButton aria-label="Epic Games">
              <svg width="14" height="16" viewBox="0 0 28 32" fill="none"><path d="M2 1h24v24l-12 6-12-6z" fill="#30302e" /><path d="M9 5H5v11h4M5 10h3M12 16V5h4v6h-4M19 5v11M26 7V5h-4v11h4v-3" stroke="#fff" strokeWidth="2" /><path d="M6 21h16M11 26h6" stroke="#bbb" strokeWidth="2" /></svg>
            </AppButton>
            <AppButton aria-label="Chrome" $open>
              <svg width={TASK} height={TASK} viewBox="0 0 32 32"><circle cx="16" cy="16" r="15" fill="#f6c92b" /><path d="M16 16L3 8.500A15 15 0 0 1 29 9H16z" fill="#df3f31" /><path d="M3 8.500A15 15 0 0 0 15 31l7-12-6-3z" fill="#2da44e" /><circle cx="16" cy="16" r="7" fill="#fff" /><circle cx="16" cy="16" r="5.500" fill="#3f82ee" /></svg>
            </AppButton>
            <AppButton aria-label="Ubisoft Connect">
              <svg width={TASK} height={TASK} viewBox="0 0 32 32" fill="none"><circle cx="16" cy="16" r="15" fill="#1476dc" /><path d="M7 21A10 10 0 1 1 25 20Q20 28 12 24M11 19q-1-9 6-8 6 3 3 9-4 3-6-1 0-4 3-3" stroke="#fff" strokeWidth="2.500" /></svg>
            </AppButton>
            <AppButton aria-label="Steam"><Steam /></AppButton>
            <AppButton aria-label="Steam game" $open><Steam /></AppButton>
            <AppButton aria-label="Discord" $open>
              <svg width="17" height="17" viewBox="0 0 34 34"><rect x="2" y="2" width="26" height="28" rx="3" fill="#6a7fc4" /><path d="M7 10q8-4 16 0l2 11-5 2-2-2h-6l-2 2-5-2z" fill="#fff" /><circle cx="12" cy="16" r="2" fill="#6a7fc4" /><circle cx="24" cy="23" r="10" fill="#d5303e" /><path d="M22 22q-4 1-4-2t3-2 2 4-3 5M26 22h6M29 19v6" stroke="#fff" strokeWidth="2" fill="none" /></svg>
            </AppButton>
            <AppButton aria-label="Paint" $open $on><PaintLogo size={16} /></AppButton>
            <AppButton aria-label="Media Player" $open>
              <svg width="15" height="13" viewBox="0 0 30 26"><rect width="30" height="26" rx="2" fill="#5b9dc6" /><rect x="4" width="20" height="26" fill="#dfeaf2" /><circle cx="13" cy="13" r="9" fill="#e8772a" /><path d="M10 7l9 6-9 6z" fill="#fff" /></svg>
            </AppButton>
          </Apps>
          <Tray>
            <PlainButton aria-label="Show hidden icons"><Chevron d={UP} color="#fff" size={8} /></PlainButton>
            <svg width="12" height="10" viewBox="0 0 24 20" fill="none" stroke="#eee" strokeWidth="2"><path d="M6 3h17v11H9M12 18h8M16 14v4M1 1h6v6H1zM4 7v11" /></svg>
            <svg width="11" height="10" viewBox="0 0 22 20" fill="none" stroke="#eee" strokeWidth="2"><path d="M1 7h4l5-5v16l-5-5H1zM13 7q2 3 0 6M16 4q4 6 0 12M19 2q5 8 0 16" /></svg>
            <Clock>5:50 PM<br />10/17/2020</Clock>
            <PlainButton aria-label="Notifications">
              <svg width="12" height="13" viewBox="0 0 24 26"><path d="M0 1h24v18h-6v6l-6-6H0z" fill="#fff" /><path d="M4 6h16M4 10h16M4 14h10" stroke="#131410" strokeWidth="2" /></svg>
            </PlainButton>
            <DesktopEdge />
          </Tray>
        </Taskbar>

        <Previews>
          {[143, 139, 139, 143, 143, 143].map((w, i) => (
            <Preview key={i} $w={w} $on={i === 4}>
              <PreviewTitle><PaintLogo />Untitled - Paint</PreviewTitle>
              <Mini><MiniPage index={i} /></Mini>
            </Preview>
          ))}
          <GhostBar />
          <GhostText $x={107}><SizeGlyph /></GhostText>
          <GhostText $x={211}><SizeGlyph />4560 × 2228px</GhostText>
        </Previews>
        <Pointer width="8" height="13" viewBox="0 0 16 26">
          <path d="M1 1v20l5-4 3 8 3-1-3-8h6z" fill="#fff" stroke="#222" />
        </Pointer>
      </Desktop>
    </>
  );
}
